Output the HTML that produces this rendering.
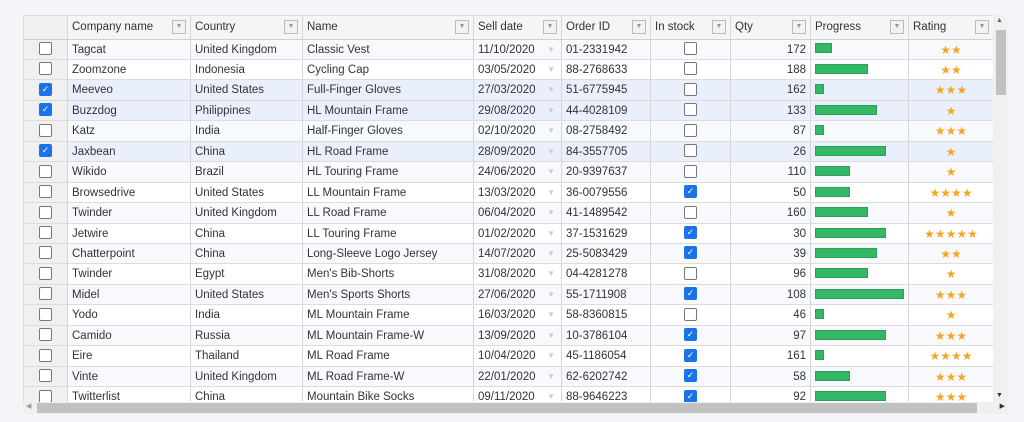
<!DOCTYPE html><html><head><style>
body{margin:0;width:1024px;height:422px;background:#f4f5f9;font-family:"Liberation Sans",sans-serif;font-size:11.5px;color:#333;overflow:hidden;position:relative}
.g{position:absolute;left:23px;top:15px;width:970px;height:387px;background:#fff;overflow:hidden;border-left:1px solid #ddd;border-top:1px solid #ddd}
.h{position:absolute;left:0;top:0;height:23px;width:970px;background:#f5f5f5;border-bottom:1px solid #d0d0d0}
.c{position:absolute;top:0;height:100%;box-sizing:border-box;border-right:1px solid #d6d6d6;padding:0 4px;line-height:20px;white-space:nowrap;overflow:hidden}
.h .c{line-height:23px}
.f{position:absolute;right:4px;top:4px;width:12px;height:12px;border:1px solid #bbb;background:#f2f2f2;font-size:7px;line-height:12px;text-align:center;color:#999}
.r{position:absolute;left:0;width:970px;height:20.45px;border-bottom:1px solid #dcdcdc;box-sizing:border-box}
.r.o{background:#f8f9fd}.r.s{background:#e9f0fc}
.cb{display:inline-block;width:11px;height:11px;border:1px solid #777;border-radius:2px;background:#fff;vertical-align:middle;margin-top:-2px}
.cb.k{background:#1a73e8;border-color:#1a73e8;color:#fff;font-size:9px;line-height:11px;text-align:center}
.bar{display:inline-block;height:8px;background:#35b866;border:1px solid #2aa057;vertical-align:middle;margin-top:-2px}
.st{color:#f5a623;font-size:12px;letter-spacing:0}
.ar{color:#ccc;font-size:8px;position:absolute;right:6px}
</style></head><body>
<div class="g">
<div class="h">
<div class="c" style="left:0;width:44px;background:#f0f0f0"></div>
<div class="c" style="left:44px;width:123px">Company name<span class="f">▼</span></div>
<div class="c" style="left:167px;width:112px">Country<span class="f">▼</span></div>
<div class="c" style="left:279px;width:171px">Name<span class="f">▼</span></div>
<div class="c" style="left:450px;width:88px">Sell date<span class="f">▼</span></div>
<div class="c" style="left:538px;width:89px">Order ID<span class="f">▼</span></div>
<div class="c" style="left:627px;width:80px">In stock<span class="f">▼</span></div>
<div class="c" style="left:707px;width:80px">Qty<span class="f">▼</span></div>
<div class="c" style="left:787px;width:98px">Progress<span class="f">▼</span></div>
<div class="c" style="left:885px;width:85px">Rating<span class="f">▼</span></div>
</div>
<div id="rows"></div>
</div>
<div style="position:absolute;left:993px;top:15px;width:15px;height:387px;background:#f0f0f0"><div style="position:absolute;left:3px;top:15px;width:10px;height:65px;background:#c1c1c1"></div><div style="position:absolute;left:3px;top:2px;font-size:7px;color:#666">▲</div><div style="position:absolute;left:3px;bottom:3px;font-size:7px;color:#333">▼</div></div>
<div style="position:absolute;left:23px;top:402px;width:985px;height:12px;background:#f0f0f0"><div style="position:absolute;left:14px;top:1px;width:940px;height:10px;background:#c1c1c1"></div><div style="position:absolute;left:3px;top:0;font-size:7px;color:#999">◀</div><div style="position:absolute;right:3px;top:0;font-size:7px;color:#333">▶</div></div>
<script>
var d=[["Tagcat","United Kingdom","Classic Vest","11/10/2020","01-2331942",0,172,17,2,0],
["Zoomzone","Indonesia","Cycling Cap","03/05/2020","88-2768633",0,188,53,2,0],
["Meeveo","United States","Full-Finger Gloves","27/03/2020","51-6775945",0,162,9,3,1],
["Buzzdog","Philippines","HL Mountain Frame","29/08/2020","44-4028109",0,133,62,1,1],
["Katz","India","Half-Finger Gloves","02/10/2020","08-2758492",0,87,9,3,0],
["Jaxbean","China","HL Road Frame","28/09/2020","84-3557705",0,26,71,1,1],
["Wikido","Brazil","HL Touring Frame","24/06/2020","20-9397637",0,110,35,1,0],
["Browsedrive","United States","LL Mountain Frame","13/03/2020","36-0079556",1,50,35,4,0],
["Twinder","United Kingdom","LL Road Frame","06/04/2020","41-1489542",0,160,53,1,0],
["Jetwire","China","LL Touring Frame","01/02/2020","37-1531629",1,30,71,5,0],
["Chatterpoint","China","Long-Sleeve Logo Jersey","14/07/2020","25-5083429",1,39,62,2,0],
["Twinder","Egypt","Men's Bib-Shorts","31/08/2020","04-4281278",0,96,53,1,0],
["Midel","United States","Men's Sports Shorts","27/06/2020","55-1711908",1,108,89,3,0],
["Yodo","India","ML Mountain Frame","16/03/2020","58-8360815",0,46,9,1,0],
["Camido","Russia","ML Mountain Frame-W","13/09/2020","10-3786104",1,97,71,3,0],
["Eire","Thailand","ML Road Frame","10/04/2020","45-1186054",1,161,9,4,0],
["Vinte","United Kingdom","ML Road Frame-W","22/01/2020","62-6202742",1,58,35,3,0],
["Twitterlist","China","Mountain Bike Socks","09/11/2020","88-9646223",1,92,71,3,0]];
var h="";d.forEach(function(r,i){
var cls="r"+(r[9]?" s":(i%2==0?" o":""));
var cb=function(k){return '<span class="cb'+(k?' k':'')+'">'+(k?'✓':'')+'</span>'};
h+='<div class="'+cls+'" style="top:'+(23.5+i*20.45)+'px">'+
'<div class="c" style="left:0;width:44px;text-align:center;background:#f0f0f0">'+cb(r[9])+'</div>'+
'<div class="c" style="left:44px;width:123px">'+r[0]+'</div>'+
'<div class="c" style="left:167px;width:112px">'+r[1]+'</div>'+
'<div class="c" style="left:279px;width:171px">'+r[2]+'</div>'+
'<div class="c" style="left:450px;width:88px">'+r[3]+'<span class="ar">▼</span></div>'+
'<div class="c" style="left:538px;width:89px">'+r[4]+'</div>'+
'<div class="c" style="left:627px;width:80px;text-align:center">'+cb(r[5])+'</div>'+
'<div class="c" style="left:707px;width:80px;text-align:right">'+r[6]+'</div>'+
'<div class="c" style="left:787px;width:98px"><span class="bar" style="width:'+(r[7]-2)+'px"></span></div>'+
'<div class="c" style="left:885px;width:85px;text-align:center"><span class="st">'+"★".repeat(r[8])+'</span></div></div>';});
document.getElementById("rows").innerHTML=h;
</script>
</body></html>
